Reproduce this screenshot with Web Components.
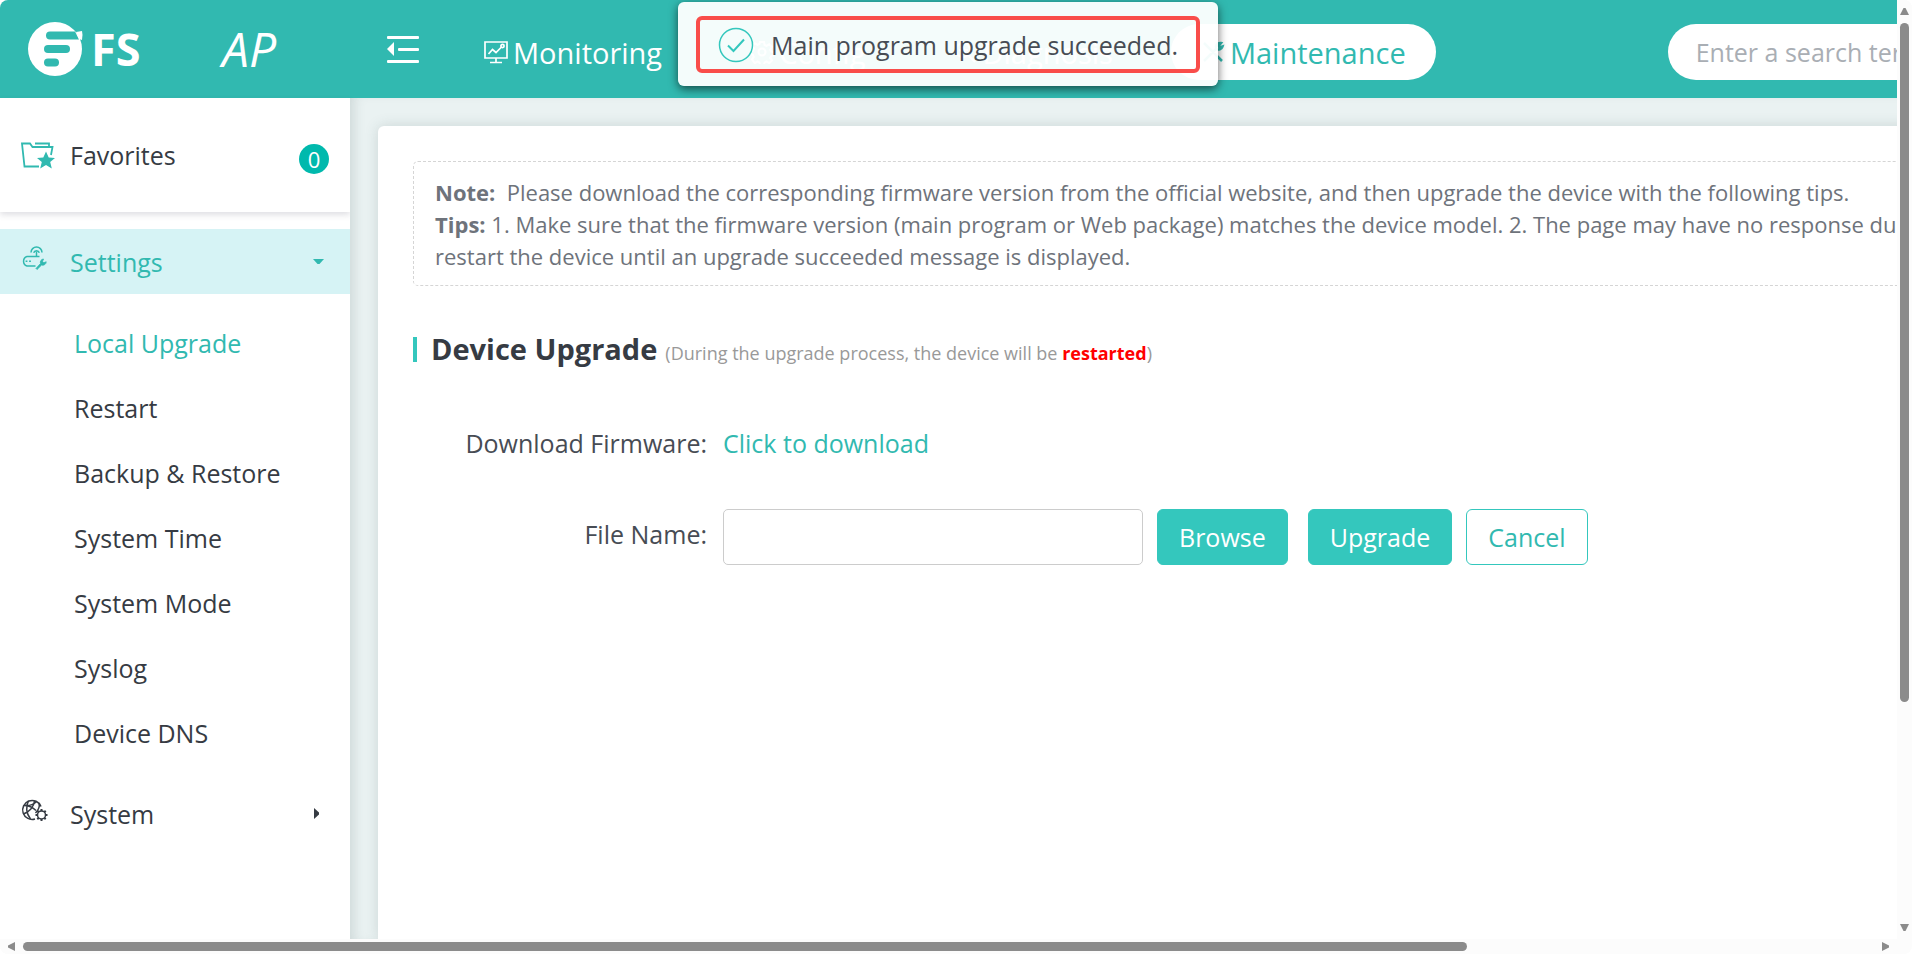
<!DOCTYPE html>
<html lang="en">
<head>
<meta charset="utf-8">
<title>AP - Local Upgrade</title>
<style>
    html, body {
        margin: 0;
        height: 100%;
        overflow: hidden;
        background: #fff;
    }

    body {
        font-family: "Segoe UI", "Open Sans", "Noto Sans", sans-serif;
        font-size: 25px;
        color: #363b43;
        --teal: #31b9b0;
        --btn: #34c7bd;
    }
</style>
</head>
<body>

<app-window>
    <app-header slot="header">
        <nav-item icon="monitor">Monitoring</nav-item>
        <nav-item icon="gear">Config</nav-item>
        <nav-item icon="pulse">Diagnosis</nav-item>
        <nav-item icon="tools" active>Maintenance</nav-item>
    </app-header>

    <side-menu slot="side">
        <menu-group icon="router" label="Settings" open>
            <menu-link active>Local Upgrade</menu-link>
            <menu-link>Restart</menu-link>
            <menu-link>Backup &amp; Restore</menu-link>
            <menu-link>System Time</menu-link>
            <menu-link>System Mode</menu-link>
            <menu-link>Syslog</menu-link>
            <menu-link>Device DNS</menu-link>
        </menu-group>
        <menu-group icon="globe" label="System"></menu-group>
    </side-menu>

    <tip-note>
        <b>Note:</b>&nbsp; Please download the corresponding firmware version from the official website, and then upgrade the device with the following tips.<br>
        <b>Tips:</b> 1. Make sure that the firmware version (main program or Web package) matches the device model. 2. The page may have no response during<br>
        restart the device until an upgrade succeeded message is displayed.
    </tip-note>
    <section-title label="Device Upgrade">(During the upgrade process, the device will be <b style="color: #f00">restarted</b>)</section-title>
    <upgrade-form></upgrade-form>
</app-window>

<toast-message>Main program upgrade succeeded.</toast-message>

<script>
const ICONS = {
    monitor: `<svg width="24" height="24" viewBox="0 0 24 24" fill="none" stroke="currentColor" stroke-width="1.7">
        <path d="M1 2h22v16H1zM12 18v4M6 22.500h12"/>
        <path d="M4.500 14l4-4.500 3.500 3L17.500 7"/><circle cx="18.500" cy="6" r="1.600"/></svg>`,
    gear: `<svg width="24" height="24" viewBox="0 0 24 24" fill="none" stroke="currentColor" stroke-width="2">
        <circle cx="12" cy="12" r="3.500"/>
        <path d="M10 2h4l.6 3 2 .9 2.600-1.700 2.800 2.800-1.700 2.600.9 2 2.800.6v3l-2.800.6-.9 2 1.700 2.600-2.800 2.800-2.600-1.700-2 .9-.6 2.600h-4l-.6-2.600-2-.9-2.600 1.700L2 19.400l1.700-2.600-.9-2L1 14v-3l2-.6.9-2L2 6l2.800-2.800 2.600 1.700 2-.9z"/></svg>`,
    pulse: `<svg width="24" height="24" viewBox="0 0 24 24" fill="none" stroke="currentColor" stroke-width="2">
        <circle cx="10" cy="10" r="7"/><path d="M15 15l7 7M6 10h3l1-3 2 5 1-2h2"/></svg>`,
    tools: `<svg width="24" height="24" viewBox="0 0 24 24" fill="none" stroke="currentColor" stroke-width="2.500">
        <path d="M3 3l18 18M3 21L15 9M15 9a4.500 4.500 0 0 1 5-6l-2.500 3 1 1.500 3-1a4.500 4.500 0 0 1-6.500 2.500z"/></svg>`,
    router: `<svg width="26" height="24" viewBox="0 0 26 24" fill="none" stroke="currentColor" stroke-width="1.500">
        <path d="M14.500 20H6a5 5 0 0 1 0-9.500h12.500M15.500 10V5.500"/>
        <path d="M10 6.500a5.500 5.500 0 0 1 11 0M12.700 6.800a2.900 2.900 0 0 1 5.600 0"/>
        <path d="M5.500 14.500v1.500M9 14.500v1.500" stroke-width="1.800"/>
        <path d="M15 22.500l4.500-5a3.400 3.400 0 0 1 3-4.500l-1 2.500 1.400 1.200 2.300-.9a3.400 3.400 0 0 1-4.600 3.200L16 23.500z" fill="currentColor" stroke-width=".8"/></svg>`,
    globe: `<svg width="28" height="24" viewBox="0 0 28 24" fill="none" stroke="currentColor" stroke-width="1.500">
        <path d="M20 8.500a9.500 9.500 0 1 0-6 12.500"/>
        <path d="M7.500 2.800C5 8 5 15 9.500 21M3 7.500c6 0 10 3 12 5M13.500 3C13 9 8 14 2.500 16M14.500 15c3-3 4.500-6 3.500-10M3.500 7.500C8 8 13 6 15.500 3.500"/>
        <circle cx="20.500" cy="17" r="4"/>
        <path d="M20.500 11v2M20.500 21v2M14.500 17h2M24.500 17h2M16.300 12.800l1.400 1.400M23.300 19.800l1.400 1.400M16.300 21.200l1.400-1.400M23.300 14.200l1.400-1.400" stroke-width="2"/></svg>`,
    folder: `<svg width="34" height="27" viewBox="0 0 34 27" fill="none" stroke="#31b9b0" stroke-width="1.800">
        <path d="M18 24.500H3.500L1 1.500h8l2.500 3.500h20L30 13"/>
        <path d="M14 1.500h14V5"/>
        <path d="M25 9.500l2.700 5.900 6.300.5-4.800 4.200 1.600 6.400-5.800-3.400-5.800 3.400 1.600-6.400-4.800-4.200 6.300-.5z" fill="#31b9b0" stroke="none"/></svg>`
};

class AppWindow extends HTMLElement {
    constructor() {
        super();
        this.attachShadow({ mode: "open" });
        this.shadowRoot.innerHTML = `
            <style>
                :host {
                    display: grid;
                    grid-template: minmax(0, 1fr) 15px / minmax(0, 1fr) 15px;
                    height: 100vh;
                    border-radius: 8px;
                    overflow: hidden;
                    background: #fcfcfc;
                }

                .view {
                    overflow: hidden;
                }

                .page {
                    display: flex;
                    flex-direction: column;
                    width: 128%;
                    height: 100%;
                }

                .body {
                    flex: 1;
                    display: flex;
                    min-height: 0;
                }

                main {
                    flex: 1;
                    display: flex;
                    padding: 28px 28px 0;
                    background: #eaf2f2;
                    box-shadow: inset 10px 0 12px -6px rgba(60, 90, 90, 0.16);
                }

                .card {
                    flex: 1;
                    box-sizing: border-box;
                    padding: 35px;
                    background: #fff;
                    border-radius: 6px 6px 0 0;
                    box-shadow: 0 0 14px rgba(60, 90, 90, 0.18);
                }
            </style>
            <div class="view">
                <div class="page">
                    <slot name="header"></slot>
                    <div class="body">
                        <slot name="side"></slot>
                        <main><div class="card"><slot></slot></div></main>
                    </div>
                </div>
            </div>
            <scroll-bar></scroll-bar>
            <scroll-bar horizontal></scroll-bar>
        `;
    }
}

class ScrollBar extends HTMLElement {
    constructor() {
        super();
        this.attachShadow({ mode: "open" });
    }

    connectedCallback() {
        const side = this.hasAttribute("horizontal");
        this.shadowRoot.innerHTML = `
            <style>
                :host {
                    display: flex;
                    flex-direction: ${side ? "row" : "column"};
                    align-items: center;
                    gap: 8px;
                    padding: ${side ? "0 8px" : "8px 0"};
                    background: #fcfcfc;
                }

                .track {
                    flex: 1;
                    display: flex;
                    flex-direction: inherit;
                }

                .thumb {
                    flex: 0 0 ${side ? "78%" : "76%"};
                    ${side ? "height" : "width"}: 9px;
                    border-radius: 5px;
                    background: #8b8b8b;
                }

                svg {
                    fill: #8b8b8b;
                }
            </style>
            ${side
                ? `<svg width="7" height="9"><path d="M7 0v9L0 5.500v-2z"/></svg>`
                : `<svg width="9" height="7"><path d="M0 7h9L5.500 0h-2z"/></svg>`}
            <div class="track"><div class="thumb"></div></div>
            ${side
                ? `<svg width="7" height="9"><path d="M0 0v9l7-3.500v-2z"/></svg>`
                : `<svg width="9" height="7"><path d="M0 0h9L5.500 7h-2z"/></svg>`}
        `;
    }
}

class AppHeader extends HTMLElement {
    constructor() {
        super();
        this.attachShadow({ mode: "open" });
        this.shadowRoot.innerHTML = `
            <style>
                :host {
                    display: flex;
                    align-items: center;
                    height: 98px;
                    box-sizing: border-box;
                    padding: 0 28px;
                    background: var(--teal);
                    color: #fff;
                }

                .logo {
                    display: flex;
                    align-items: center;
                    gap: 8px;
                    width: 194px;
                    font-size: 45px;
                    font-weight: bold;
                    line-height: 54px;
                }

                .model {
                    width: 164px;
                    font-size: 48px;
                    font-style: italic;
                    line-height: 54px;
                }

                button {
                    padding: 0;
                    border: 0;
                    background: none;
                    line-height: 0;
                }

                nav {
                    display: flex;
                    gap: 28px;
                    margin-left: 34px;
                    padding-top: 6px;
                }

                input {
                    flex: 1;
                    box-sizing: border-box;
                    height: 56px;
                    margin: 6px 0 0 232px;
                    padding: 0 28px;
                    border: 0;
                    border-radius: 28px;
                    font: inherit;
                }

                input::placeholder {
                    color: #a9aeb4;
                }
            </style>
            <div class="logo">
                <svg width="55" height="54" viewBox="0 0 55 54">
                    <circle cx="27" cy="27" r="27" fill="#fff"/>
                    <path d="M22 9.500h25l4 8H22a4 4 0 0 1 0-8z" fill="#31b9b0"/>
                    <path d="M48 10l6-1q1 4 0 9l-3-1z" fill="#fff"/>
                    <rect x="16" y="23" width="26" height="8" rx="4" fill="#31b9b0"/>
                    <rect x="16" y="36.500" width="15" height="8" rx="4" fill="#31b9b0"/>
                </svg>
                FS
            </div>
            <div class="model">AP</div>
            <button aria-label="Collapse menu">
                <svg width="34" height="27" viewBox="0 0 34 27" fill="#fff">
                    <rect x="1" width="32" height="3" rx="1"/>
                    <rect x="12" y="12" width="21" height="3" rx="1"/>
                    <rect x="1" y="24" width="32" height="3" rx="1"/>
                    <path d="M8 6v14L1 13z"/>
                </svg>
            </button>
            <nav><slot></slot></nav>
            <input type="search" placeholder="Enter a search term" aria-label="Search">
        `;
    }
}

class NavItem extends HTMLElement {
    constructor() {
        super();
        this.attachShadow({ mode: "open" });
    }

    connectedCallback() {
        this.shadowRoot.innerHTML = `
            <style>
                :host {
                    display: block;
                }

                a {
                    display: flex;
                    align-items: center;
                    gap: 5px;
                    height: 56px;
                    padding: 0 30px;
                    border-radius: 28px;
                    color: #fff;
                    font-size: 29px;
                    text-decoration: none;
                }

                :host([active]) a {
                    background: #fff;
                    color: var(--teal);
                }
            </style>
            <a href="#">${ICONS[this.getAttribute("icon")]}<slot></slot></a>
        `;
    }
}

class SideMenu extends HTMLElement {
    constructor() {
        super();
        this.attachShadow({ mode: "open" });
        this.shadowRoot.innerHTML = `
            <style>
                :host {
                    display: block;
                    flex: 0 0 350px;
                    background: #fff;
                }

                .favorites {
                    display: flex;
                    align-items: center;
                    gap: 15px;
                    height: 114px;
                    box-sizing: border-box;
                    margin-bottom: 17px;
                    padding: 0 21px;
                    box-shadow: 0 3px 6px rgba(60, 60, 90, 0.16);
                    color: inherit;
                    text-decoration: none;
                }

                .count {
                    width: 30px;
                    margin: 8px 0 0 auto;
                    border-radius: 50%;
                    background: #00b9ad;
                    color: #fff;
                    font-size: 22px;
                    line-height: 30px;
                    text-align: center;
                }
            </style>
            <a class="favorites" href="#">
                ${ICONS.folder}
                <span>Favorites</span>
                <span class="count">0</span>
            </a>
            <slot></slot>
        `;
    }
}

class MenuGroup extends HTMLElement {
    constructor() {
        super();
        this.attachShadow({ mode: "open" });
    }

    connectedCallback() {
        const open = this.hasAttribute("open");
        this.shadowRoot.innerHTML = `
            <style>
                :host {
                    display: block;
                }

                button {
                    display: grid;
                    grid-template-columns: 34px 1fr 16px;
                    gap: 15px;
                    align-items: center;
                    width: 100%;
                    height: 65px;
                    padding: 0 21px;
                    border: 0;
                    background: none;
                    color: inherit;
                    font: inherit;
                    text-align: left;
                }

                .icon {
                    padding-bottom: 8px;
                    line-height: 0;
                }

                :host([open]) button {
                    background: #d6f3f5;
                    color: var(--teal);
                }

                .links {
                    padding: 17px 0 15px;
                }
            </style>
            <button aria-expanded="${open}">
                <span class="icon">${ICONS[this.getAttribute("icon")]}</span>
                <span>${this.getAttribute("label")}</span>
                <svg width="12" height="12" fill="currentColor">
                    <path d="${open ? "M0 3h11L6.500 8h-2z" : "M1 0v11l5-4.500v-2z"}"/>
                </svg>
            </button>
            ${open ? `<div class="links"><slot></slot></div>` : ""}
        `;
    }
}

class MenuLink extends HTMLElement {
    constructor() {
        super();
        this.attachShadow({ mode: "open" });
        this.shadowRoot.innerHTML = `
            <style>
                :host {
                    display: block;
                }

                a {
                    display: block;
                    padding-left: 74px;
                    color: inherit;
                    line-height: 65px;
                    text-decoration: none;
                }

                :host([active]) a {
                    color: var(--teal);
                }
            </style>
            <a href="#"><slot></slot></a>
        `;
    }
}

class TipNote extends HTMLElement {
    constructor() {
        super();
        this.attachShadow({ mode: "open" });
        this.shadowRoot.innerHTML = `
            <style>
                :host {
                    display: block;
                    padding: 14px 21px 13px;
                    border: 1px dashed #d5d5d5;
                    border-radius: 5px;
                    color: #6e737b;
                    font-size: 22px;
                    line-height: 32px;
                    white-space: nowrap;
                }
            </style>
            <slot></slot>
        `;
    }
}

class SectionTitle extends HTMLElement {
    constructor() {
        super();
        this.attachShadow({ mode: "open" });
    }

    connectedCallback() {
        this.shadowRoot.innerHTML = `
            <style>
                :host {
                    display: flex;
                    align-items: center;
                    gap: 14px;
                    margin: 43px 0 49px;
                    white-space: nowrap;
                }

                .bar {
                    width: 4px;
                    height: 25px;
                    background: var(--btn);
                }

                .text {
                    display: flex;
                    align-items: baseline;
                    gap: 8px;
                }

                h2 {
                    margin: 0;
                    font-size: 29px;
                    line-height: 40px;
                }

                small {
                    color: #999;
                    font-size: 18px;
                    line-height: 20px;
                }
            </style>
            <span class="bar"></span>
            <div class="text">
                <h2>${this.getAttribute("label")}</h2>
                <small><slot></slot></small>
            </div>
        `;
    }
}

class UpgradeForm extends HTMLElement {
    constructor() {
        super();
        this.attachShadow({ mode: "open" });
        this.shadowRoot.innerHTML = `
            <style>
                :host {
                    display: block;
                }

                form {
                    display: grid;
                    gap: 35px;
                }

                .row {
                    display: flex;
                    height: 56px;
                    line-height: 50px;
                    color: #474c54;
                }

                .name {
                    width: 294px;
                    margin-right: 16px;
                    text-align: right;
                }

                a {
                    color: var(--teal);
                    text-decoration: none;
                }

                input {
                    box-sizing: border-box;
                    width: 420px;
                    margin: 0 14px 0 0;
                    padding: 0 14px;
                    border: 1px solid #ccc;
                    border-radius: 5px;
                    font: inherit;
                }

                button {
                    margin-right: 14px;
                    padding: 0 21px;
                    border: 1px solid var(--btn);
                    border-radius: 6px;
                    background: var(--btn);
                    color: #fff;
                    font: inherit;
                }

                .browse {
                    margin-right: 20px;
                }

                .plain {
                    background: #fff;
                    color: var(--teal);
                }
            </style>
            <form>
                <div class="row">
                    <span class="name">Download Firmware:</span>
                    <a href="#">Click to download</a>
                </div>
                <div class="row">
                    <label class="name" for="file">File Name:</label>
                    <input id="file" type="text">
                    <button type="button" class="browse">Browse</button>
                    <button type="button">Upgrade</button>
                    <button type="button" class="plain">Cancel</button>
                </div>
            </form>
        `;
    }
}

class ToastMessage extends HTMLElement {
    constructor() {
        super();
        this.attachShadow({ mode: "open" });
        this.shadowRoot.innerHTML = `
            <style>
                /* floats over the header, centred on the visible page */
                :host {
                    position: absolute;
                    top: 2px;
                    left: calc(50% - 8px);
                    transform: translateX(-50%);
                    padding: 14px 18px 13px;
                    border-radius: 6px;
                    background: rgba(255, 255, 255, 0.95);
                    box-shadow: 0 3px 10px rgba(0, 0, 0, 0.6);
                    color: #474c54;
                    white-space: nowrap;
                }

                div {
                    display: flex;
                    align-items: center;
                    gap: 17px;
                    height: 49px;
                    padding: 0 18px;
                    border: 4px solid #f94d4a;
                    border-radius: 6px;
                }
            </style>
            <div role="status">
                <svg width="36" height="36" viewBox="0 0 36 36" fill="none" stroke="#34c7bd" stroke-width="1.500">
                    <circle cx="18" cy="18" r="16.500"/>
                    <path d="M10 18.500l5.500 5.500L26 12.500" stroke-width="2"/>
                </svg>
                <slot></slot>
            </div>
        `;
    }
}

customElements.define("app-window", AppWindow);
customElements.define("scroll-bar", ScrollBar);
customElements.define("app-header", AppHeader);
customElements.define("nav-item", NavItem);
customElements.define("side-menu", SideMenu);
customElements.define("menu-group", MenuGroup);
customElements.define("menu-link", MenuLink);
customElements.define("tip-note", TipNote);
customElements.define("section-title", SectionTitle);
customElements.define("upgrade-form", UpgradeForm);
customElements.define("toast-message", ToastMessage);
</script>
</body>
</html>
